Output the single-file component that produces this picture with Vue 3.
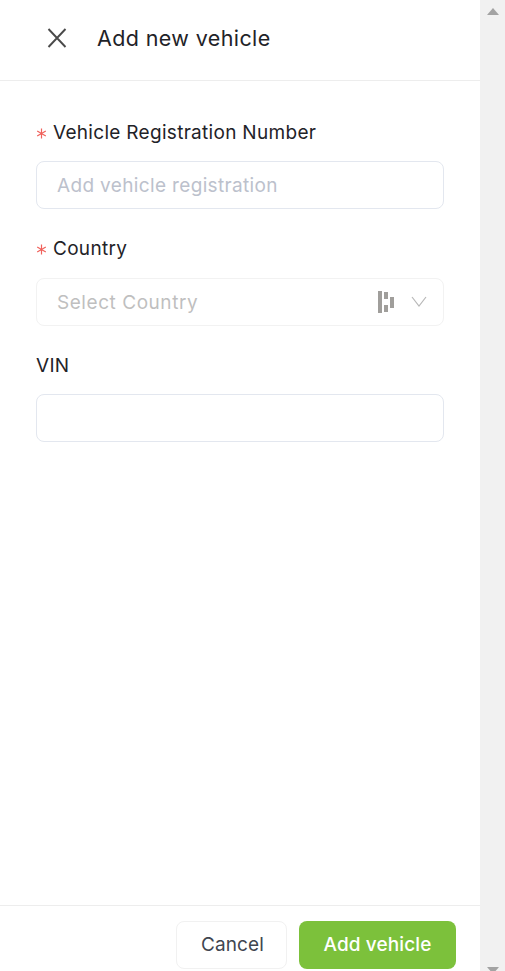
<template>
  <div class="page">
    <div class="panel">
      <div class="panel-header">
        <button class="close-btn" aria-label="Close">
          <svg width="20" height="20" viewBox="0 0 20 20" fill="none" stroke="#4a4a4a" stroke-width="1.9">
            <path d="M1.5 1 L18.5 19 M18.5 1 L1.5 19" />
          </svg>
        </button>
        <h1>Add new vehicle</h1>
      </div>

      <form class="panel-body" @submit.prevent>
        <div v-for="field in fields" :key="field.label" class="field">
          <label>
            <svg v-if="field.required" class="req" width="11" height="11" viewBox="0 0 11 11" fill="none" stroke="#f0625c" stroke-width="1.2">
              <path d="M5.5 0.5 V10.5 M1.2 3 L9.8 8 M9.8 3 L1.2 8" />
            </svg>{{ field.label }}
          </label>
          <div v-if="field.select" class="select">
            <span class="select-text">{{ field.placeholder }}</span>
            <svg class="dashlane" width="16" height="22" viewBox="0 0 16 22" fill="#a09e9b">
              <rect x="0" y="0" width="4" height="22" />
              <rect x="6" y="1" width="4" height="7" />
              <rect x="6" y="14" width="4" height="7" />
              <rect x="12" y="6" width="4" height="11" />
            </svg>
            <svg class="chevron" width="16" height="11" viewBox="0 0 16 11" fill="none" stroke="#b8b8b8" stroke-width="1.2">
              <path d="M1 1 L8 10 L15 1" />
            </svg>
          </div>
          <input v-else type="text" :placeholder="field.placeholder" />
        </div>
      </form>

      <div class="panel-footer">
        <button class="btn btn-cancel">Cancel</button>
        <button class="btn btn-primary">Add vehicle</button>
      </div>
    </div>

    <div class="scrollbar">
      <span class="arrow up"></span>
      <span class="arrow down"></span>
    </div>
  </div>
</template>

<script setup>
const fields = [
  { label: 'Vehicle Registration Number', placeholder: 'Add vehicle registration', required: true },
  { label: 'Country', placeholder: 'Select Country', required: true, select: true },
  { label: 'VIN', placeholder: '' }
]
</script>

<style scoped>
.page {
  display: flex;
  height: 971px;
  overflow: hidden;
  background: #fff;
  font-family: Inter, "Liberation Sans", sans-serif;
  color: #1f2328;
}

.panel {
  flex: 1;
  min-width: 0;
  display: flex;
  flex-direction: column;
}

.panel-header {
  height: 81px;
  flex-shrink: 0;
  box-sizing: border-box;
  border-bottom: 1px solid #ededed;
  display: flex;
  align-items: center;
  padding: 0 0 4px 47px;
  gap: 30px;
}

.close-btn {
  width: 20px;
  height: 20px;
  padding: 0;
  border: none;
  background: none;
  display: flex;
}

.panel-header h1 {
  margin: 0;
  font-size: 21.5px;
  font-weight: 400;
  letter-spacing: 0.38px;
  line-height: 28px;
  color: #1f2328;
}

.panel-body {
  flex: 1;
  padding: 37.5px 36px 0;
  display: flex;
  flex-direction: column;
  gap: 26px;
}

.field label {
  display: block;
  font-size: 19px;
  letter-spacing: 0.3px;
  line-height: 28px;
  margin-bottom: 14.5px;
}

.req {
  margin: 0 6px 0 0;
  vertical-align: 0;
}

.field input,
.select {
  display: flex;
  align-items: center;
  width: 100%;
  height: 48px;
  box-sizing: border-box;
  border: 1px solid #e3e7ef;
  border-radius: 8px;
  padding: 0 20px;
  font: inherit;
  font-size: 19px;
  letter-spacing: 0.35px;
  background: #fff;
  outline: none;
}

.field input::placeholder {
  color: #bcc1cc;
}

.select {
  border-color: #f2f2f2;
  padding-right: 16px;
  letter-spacing: 0.55px;
}

.select-text {
  flex: 1;
  color: #bfbfbf;
  padding-top: 2px;
}

.dashlane {
  margin-right: 17px;
}

.panel-footer {
  height: 66px;
  flex-shrink: 0;
  box-sizing: border-box;
  border-top: 1px solid #ededed;
  display: flex;
  justify-content: flex-end;
  gap: 12px;
  padding: 15px 24px 0 0;
}

.btn {
  height: 48px;
  border-radius: 8px;
  font: inherit;
  font-size: 19px;
  letter-spacing: 0.1px;
  padding: 0 0 2px;
  cursor: pointer;
}

.btn-cancel {
  width: 111px;
  background: #fff;
  border: 1px solid #f1f1f1;
  color: #3f4650;
  padding-left: 2px;
}

.btn-primary {
  width: 157px;
  background: #7cc13b;
  border: none;
  color: #fff;
  font-weight: 500;
}

.scrollbar {
  width: 25px;
  flex-shrink: 0;
  background: #f1f1f1;
  display: flex;
  flex-direction: column;
  justify-content: space-between;
  align-items: center;
  padding: 8px 0 0;
  box-sizing: border-box;
}

.arrow {
  width: 0;
  height: 0;
  border-left: 6px solid transparent;
  border-right: 6px solid transparent;
}

.arrow.up {
  border-bottom: 7px solid #a3a3a3;
}

.arrow.down {
  border-top: 7px solid #a3a3a3;
  margin-bottom: -3px;
}
</style>
